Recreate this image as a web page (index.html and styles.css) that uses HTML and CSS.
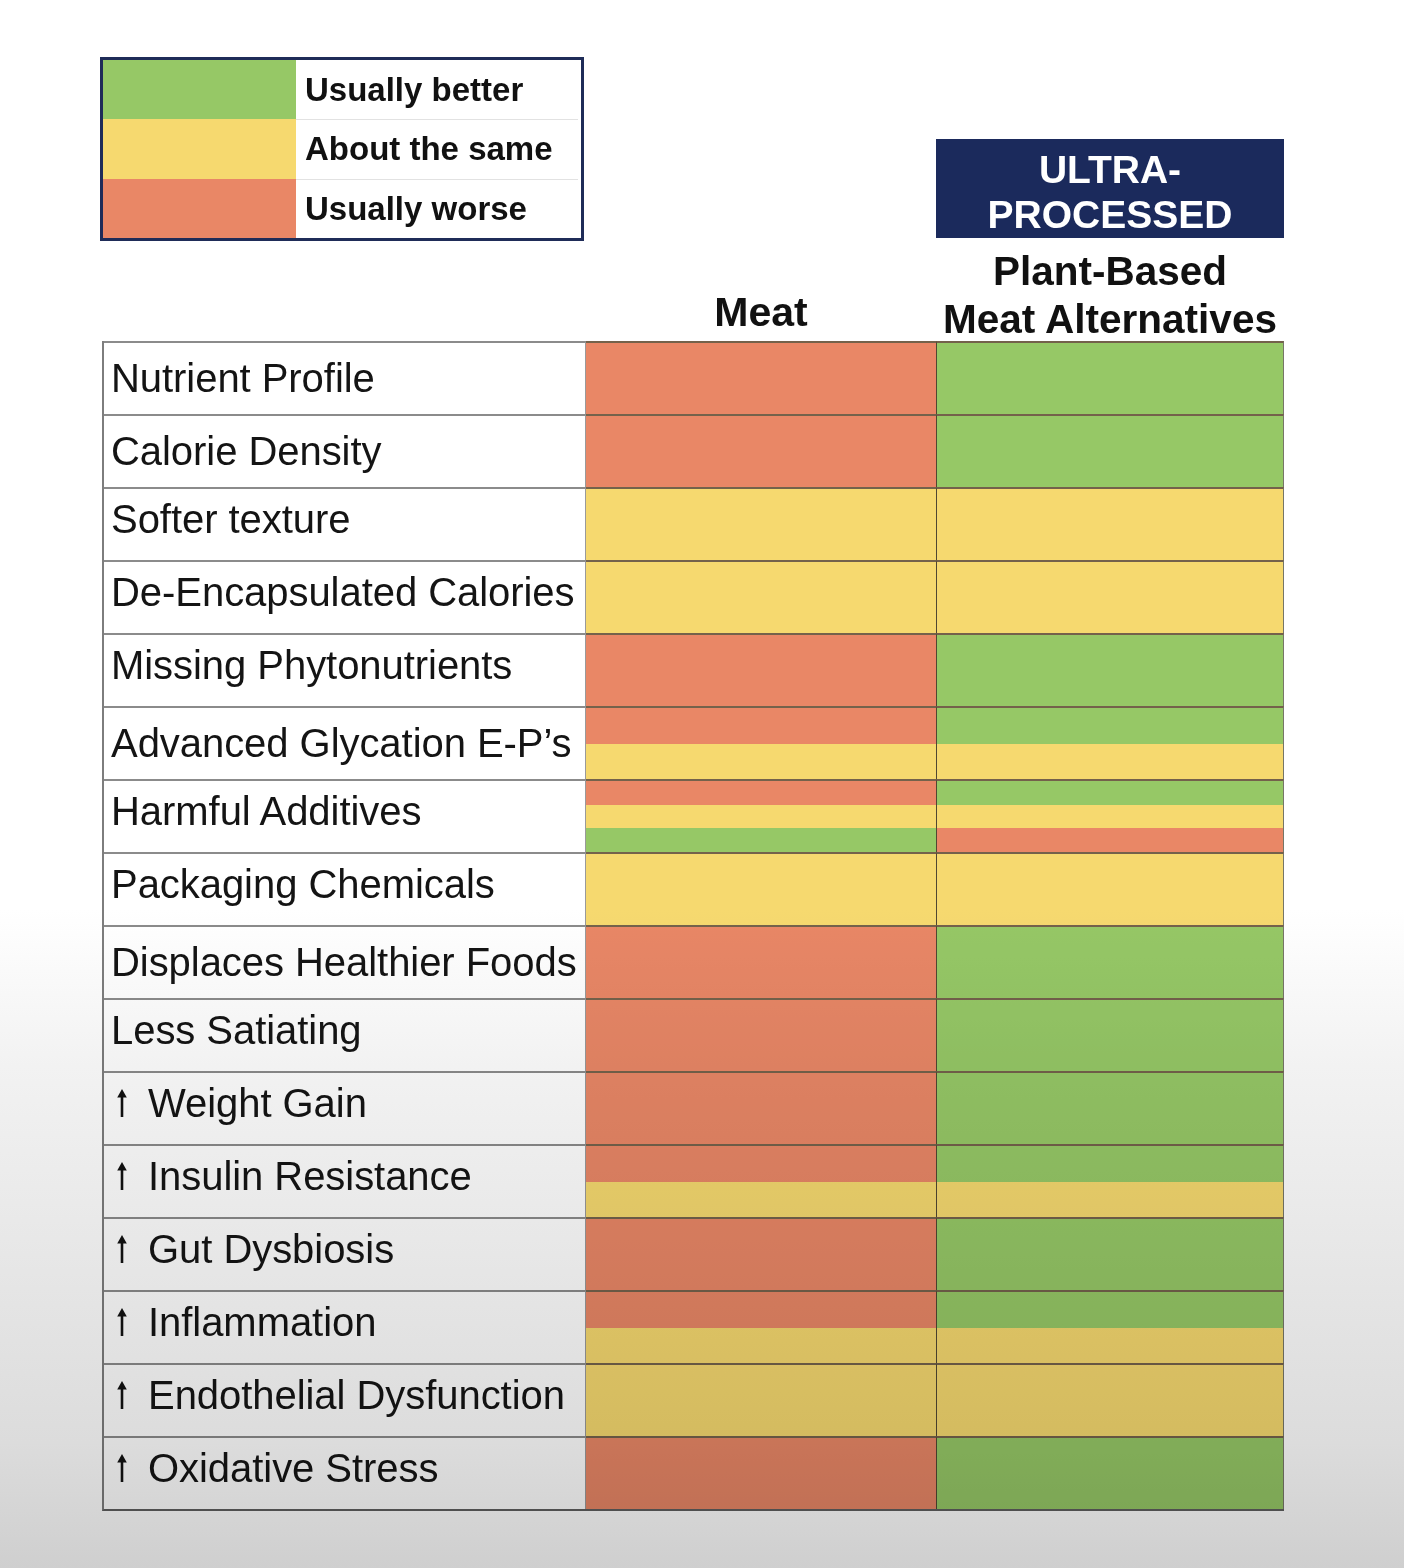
FILE: index.html
```html
<!DOCTYPE html>
<html lang="en">
<head>
<meta charset="utf-8">
<title>Meat vs Plant-Based Meat Alternatives</title>
<link rel="stylesheet" href="styles.css">
</head>
<body>
<div class="page">
  <div class="chart">
    <div class="head">
      <div class="legend">
        <div class="legend-row"><span class="swatch g"></span><span class="legend-text">Usually better</span></div>
        <div class="legend-row"><span class="swatch y"></span><span class="legend-text">About the same</span></div>
        <div class="legend-row"><span class="swatch r"></span><span class="legend-text">Usually worse</span></div>
      </div>
      <div class="col-head meat-head">Meat</div>
      <div class="col-head plant-head">
        <div class="ultra">ULTRA-<br>PROCESSED</div>
        <div class="plant-title">Plant-Based<br>Meat Alternatives</div>
      </div>
    </div>

    <div class="table">
      <div class="row"><div class="label mid">Nutrient Profile</div><div class="cell"><i class="r"></i></div><div class="cell"><i class="g"></i></div></div>
      <div class="row"><div class="label mid">Calorie Density</div><div class="cell"><i class="r"></i></div><div class="cell"><i class="g"></i></div></div>
      <div class="row"><div class="label">Softer texture</div><div class="cell"><i class="y"></i></div><div class="cell"><i class="y"></i></div></div>
      <div class="row"><div class="label">De-Encapsulated Calories</div><div class="cell"><i class="y"></i></div><div class="cell"><i class="y"></i></div></div>
      <div class="row"><div class="label">Missing Phytonutrients</div><div class="cell"><i class="r"></i></div><div class="cell"><i class="g"></i></div></div>
      <div class="row"><div class="label mid">Advanced Glycation E-P’s</div><div class="cell"><i class="r"></i><i class="y"></i></div><div class="cell"><i class="g"></i><i class="y"></i></div></div>
      <div class="row"><div class="label">Harmful Additives</div><div class="cell"><i class="r"></i><i class="y"></i><i class="g"></i></div><div class="cell"><i class="g"></i><i class="y"></i><i class="r"></i></div></div>
      <div class="row"><div class="label">Packaging Chemicals</div><div class="cell"><i class="y"></i></div><div class="cell"><i class="y"></i></div></div>
      <div class="row"><div class="label mid">Displaces Healthier Foods</div><div class="cell"><i class="r"></i></div><div class="cell"><i class="g"></i></div></div>
      <div class="row"><div class="label">Less Satiating</div><div class="cell"><i class="r"></i></div><div class="cell"><i class="g"></i></div></div>
      <div class="row"><div class="label"><span class="arrow"><svg width="22" height="30" viewBox="0 0 22 30"><path d="M11 6 V29" stroke="#111" stroke-width="2.6" fill="none"/><path d="M11 1 L6.2 9.5 L15.8 9.5 Z" fill="#111"/></svg></span>Weight Gain</div><div class="cell"><i class="r"></i></div><div class="cell"><i class="g"></i></div></div>
      <div class="row"><div class="label"><span class="arrow"><svg width="22" height="30" viewBox="0 0 22 30"><path d="M11 6 V29" stroke="#111" stroke-width="2.6" fill="none"/><path d="M11 1 L6.2 9.5 L15.8 9.5 Z" fill="#111"/></svg></span>Insulin Resistance</div><div class="cell"><i class="r"></i><i class="y"></i></div><div class="cell"><i class="g"></i><i class="y"></i></div></div>
      <div class="row"><div class="label"><span class="arrow"><svg width="22" height="30" viewBox="0 0 22 30"><path d="M11 6 V29" stroke="#111" stroke-width="2.6" fill="none"/><path d="M11 1 L6.2 9.5 L15.8 9.5 Z" fill="#111"/></svg></span>Gut Dysbiosis</div><div class="cell"><i class="r"></i></div><div class="cell"><i class="g"></i></div></div>
      <div class="row"><div class="label"><span class="arrow"><svg width="22" height="30" viewBox="0 0 22 30"><path d="M11 6 V29" stroke="#111" stroke-width="2.6" fill="none"/><path d="M11 1 L6.2 9.5 L15.8 9.5 Z" fill="#111"/></svg></span>Inflammation</div><div class="cell"><i class="r"></i><i class="y"></i></div><div class="cell"><i class="g"></i><i class="y"></i></div></div>
      <div class="row"><div class="label"><span class="arrow"><svg width="22" height="30" viewBox="0 0 22 30"><path d="M11 6 V29" stroke="#111" stroke-width="2.6" fill="none"/><path d="M11 1 L6.2 9.5 L15.8 9.5 Z" fill="#111"/></svg></span>Endothelial Dysfunction</div><div class="cell"><i class="y"></i></div><div class="cell"><i class="y"></i></div></div>
      <div class="row"><div class="label"><span class="arrow"><svg width="22" height="30" viewBox="0 0 22 30"><path d="M11 6 V29" stroke="#111" stroke-width="2.6" fill="none"/><path d="M11 1 L6.2 9.5 L15.8 9.5 Z" fill="#111"/></svg></span>Oxidative Stress</div><div class="cell"><i class="r"></i></div><div class="cell"><i class="g"></i></div></div>
    </div>
  </div>
</div>
</body>
</html>
```

FILE: styles.css
```css
html {
  background: #ffffff;
}

body {
  margin: 0;
  background: #ffffff;
  font-family: "Liberation Sans", Arial, Helvetica, sans-serif;
  color: #111111;
}

.page {
  position: relative;
  width: 1404px;
  height: 1568px;
  padding: 57px 0 0 102px;
  box-sizing: border-box;
  overflow: hidden;
}

/* soft video vignette: page darkens toward the bottom */
.page::after {
  content: "";
  position: absolute;
  left: 0;
  top: 0;
  width: 1404px;
  height: 1568px;
  pointer-events: none;
  mix-blend-mode: multiply;
  background: linear-gradient(to bottom,
    #ffffff 0%,
    #ffffff 58%,
    #f2f2f2 68%,
    #e7e7e7 80%,
    #dcdcdc 92%,
    #cfcfcf 100%);
}

.chart {
  width: 1182px;
}

.head {
  display: grid;
  grid-template-columns: 484px 350px 348px;
  height: 284px;
  align-items: end;
}

/* legend */
.legend {
  align-self: start;
  margin-left: -2px;
  width: 484px;
  height: 184px;
  box-sizing: border-box;
  border: 3px solid #1f2c58;
  display: flex;
  flex-direction: column;
  background: #fff;
}

.legend-row {
  flex: 1;
  display: flex;
  align-items: stretch;
}

.legend-row + .legend-row .legend-text {
  border-top: 1px solid #e2e2e2;
}

.swatch {
  width: 193px;
  flex: none;
}

.legend-text {
  flex: 1;
  display: flex;
  align-items: center;
  padding-left: 9px;
  font-size: 33px;
  font-weight: bold;
  margin-right: 3px;
}

.g { background: #96c866; }
.y { background: #f6d96f; }
.r { background: #e98766; }

/* column heads */
.col-head {
  font-weight: bold;
  text-align: center;
}

.meat-head {
  font-size: 41px;
  line-height: 48px;
  padding-bottom: 5px;
  color: #111;
}

.ultra {
  background: #1b2a5c;
  color: #ffffff;
  font-size: 39px;
  height: 99px;
  box-sizing: border-box;
  padding-top: 8px;
  line-height: 45px;
}

.plant-title {
  background: #ffffff;
  font-size: 40.5px;
  height: 103px;
  box-sizing: border-box;
  padding-top: 9px;
  line-height: 48px;
}

/* table */
.table {
  border-left: 2px solid #7d7d7d;
  border-bottom: 2px solid #5e5e5e;
  width: 1182px;
  box-sizing: border-box;
}

.row {
  display: grid;
  grid-template-columns: 482px 350px 348px;
  height: 73px;
}

.label {
  border-top: 2px solid #8b8b8b;
  border-right: 1px solid #9a9a9a;
  display: flex;
  align-items: center;
  padding-left: 7px;
  padding-bottom: 10px;
  font-size: 40px;
  white-space: nowrap;
  letter-spacing: -0.05px;
  color: #141414;
}

.label.mid {
  padding-bottom: 0;
}

.arrow {
  display: inline-flex;
  width: 37px;
  height: 30px;
  margin-top: -2px;
}

.arrow svg {
  display: block;
}

.cell {
  border-top: 2px solid rgba(70, 45, 15, 0.75);
  display: flex;
  flex-direction: column;
}

.cell + .cell {
  border-left: 1px solid rgba(50, 40, 15, 0.85);
  border-right: 1px solid rgba(60, 60, 40, 0.7);
}

.cell i {
  flex: 1;
  display: block;
}
```
